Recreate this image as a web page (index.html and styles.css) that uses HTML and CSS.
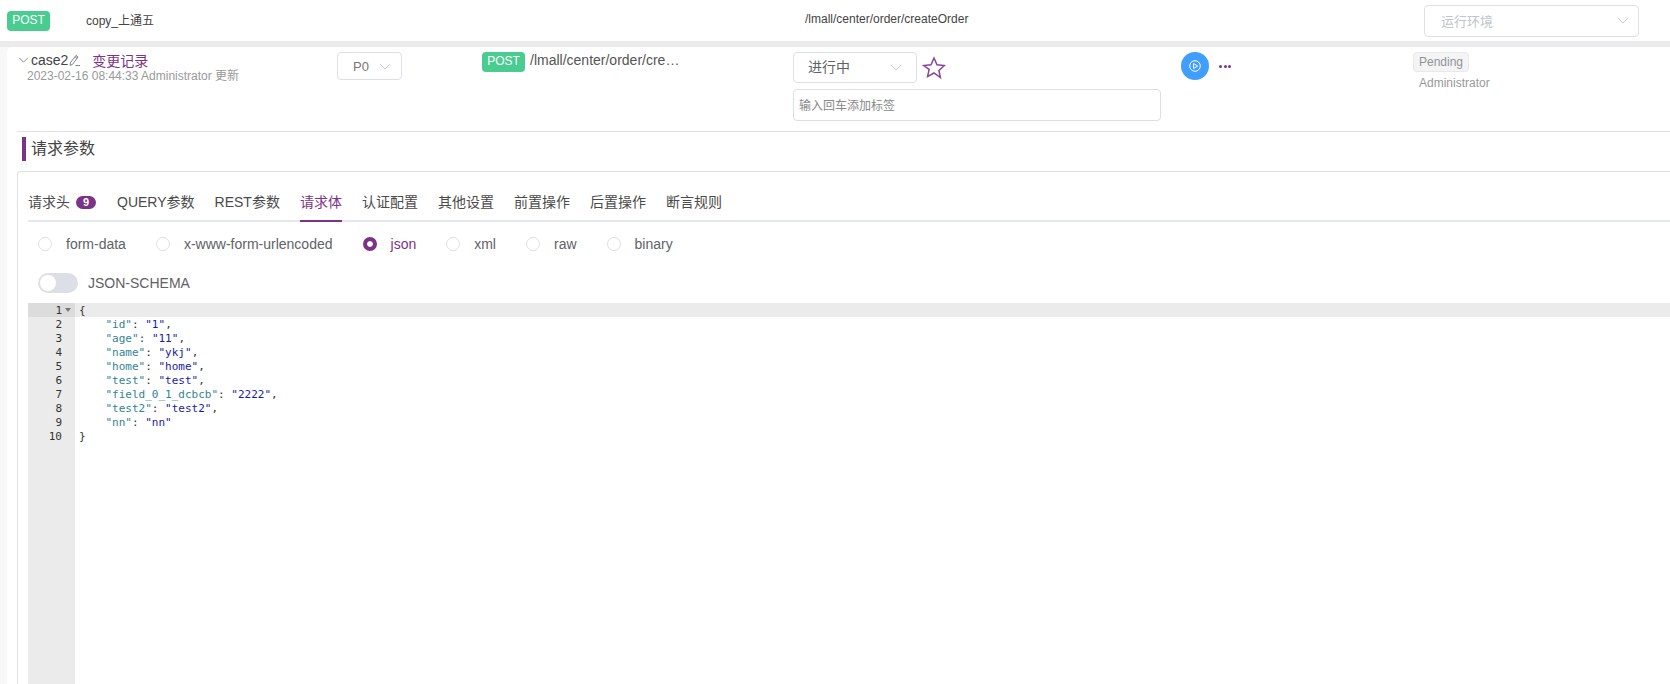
FILE: index.html
```html
<!DOCTYPE html>
<html lang="zh">
<head>
<meta charset="utf-8">
<title>用例</title>
<link rel="stylesheet" href="styles.css">
</head>
<body>
<header class="topbar">
  <span class="method">POST</span>
  <span class="api-name">copy_上通五</span>
  <span class="api-url">/lmall/center/order/createOrder</span>
  <div class="select env"><span>运行环境</span><svg class="chev" viewBox="0 0 14 8"><path d="M1 1l6 6 6-6"/></svg></div>
</header>
<div class="workspace">
<main class="card">
  <section class="case-row">
    <div class="case-info">
      <div class="case-title">
        <svg class="caret" viewBox="0 0 12 7"><path d="M1 1l5 5 5-5"/></svg>
        <span class="case-name">case2</span>
        <svg class="pencil" viewBox="0 0 13 14"><path d="M1.500 9.500L7.500 1.500l2.300 1.700-6 8-2.600 1.100z"/><path d="M6.500 3l2.300 1.700M7 12.500h5"/></svg>
        <a class="history">变更记录</a>
      </div>
      <div class="case-time">2023-02-16 08:44:33 Administrator 更新</div>
    </div>
    <div class="select priority"><span>P0</span><svg class="chev" viewBox="0 0 14 8"><path d="M1 1l6 6 6-6"/></svg></div>
    <div class="case-url"><span class="method">POST</span><span class="url-text">/lmall/center/order/cre…</span></div>
    <div class="case-status">
      <div class="status-line">
        <div class="select status"><span>进行中</span><svg class="chev" viewBox="0 0 14 8"><path d="M1 1l6 6 6-6"/></svg></div>
        <svg class="star" viewBox="0 0 24 24"><path d="M12 2l3 6.700 7.300.8-5.400 4.900 1.500 7.200L12 17l-6.400 3.600 1.500-7.200L1.700 9.500 9 8.700z"/></svg>
      </div>
      <div class="tag-input">输入回车添加标签</div>
    </div>
    <div class="case-actions">
      <span class="run"><svg viewBox="0 0 14 14"><circle cx="7" cy="7" r="5.300"/><path d="M5.600 4.500v5l4-2.500z"/></svg></span>
      <span class="more"><i></i><i></i><i></i></span>
    </div>
    <div class="case-result">
      <span class="pending">Pending</span>
      <span class="owner">Administrator</span>
    </div>
  </section>
  <h2 class="section-title">请求参数</h2>
  <section class="panel">
    <nav class="tabs">
      <a class="tab">请求头<b class="badge">9</b></a>
      <a class="tab">QUERY参数</a>
      <a class="tab">REST参数</a>
      <a class="tab active">请求体</a>
      <a class="tab">认证配置</a>
      <a class="tab">其他设置</a>
      <a class="tab">前置操作</a>
      <a class="tab">后置操作</a>
      <a class="tab">断言规则</a>
    </nav>
    <div class="radios">
      <label class="radio"><i></i>form-data</label>
      <label class="radio"><i></i>x-www-form-urlencoded</label>
      <label class="radio on"><i></i>json</label>
      <label class="radio"><i></i>xml</label>
      <label class="radio"><i></i>raw</label>
      <label class="radio"><i></i>binary</label>
    </div>
    <div class="schema"><span class="switch"></span>JSON-SCHEMA</div>
    <div class="editor">
      <div class="gutter">
        <div class="gl active">1<svg class="fold" viewBox="0 0 6 4"><path d="M0 0h6L3 4z"/></svg></div>
        <div class="gl">2</div><div class="gl">3</div><div class="gl">4</div><div class="gl">5</div>
        <div class="gl">6</div><div class="gl">7</div><div class="gl">8</div><div class="gl">9</div><div class="gl">10</div>
      </div>
      <pre class="code"><div class="cl active">{</div><div class="cl">    <span class="k">"id"</span>: <span class="s">"1"</span>,</div><div class="cl">    <span class="k">"age"</span>: <span class="s">"11"</span>,</div><div class="cl">    <span class="k">"name"</span>: <span class="s">"ykj"</span>,</div><div class="cl">    <span class="k">"home"</span>: <span class="s">"home"</span>,</div><div class="cl">    <span class="k">"test"</span>: <span class="s">"test"</span>,</div><div class="cl">    <span class="k">"field_0_1_dcbcb"</span>: <span class="s">"2222"</span>,</div><div class="cl">    <span class="k">"test2"</span>: <span class="s">"test2"</span>,</div><div class="cl">    <span class="k">"nn"</span>: <span class="s">"nn"</span></div><div class="cl">}</div></pre>
    </div>
  </section>
</main>
</div>
</body>
</html>
```
FILE: styles.css
```css
* { box-sizing: border-box; }
html, body { margin: 0; height: 684px; overflow: hidden; }
body {
  width: 1670px;
  background: #fff;
  font-family: "Liberation Sans", "Noto Sans CJK SC", sans-serif;
  color: #606266;
  display: flex;
  flex-direction: column;
}
svg { display: block; }
.topbar {
  height: 41px;
  flex: none;
  display: grid;
  grid-template-columns: 79px 719px 619px 215px;
  align-items: center;
  padding-left: 7px;
  background: #fff;
}
.method {
  display: inline-block;
  width: 43px;
  height: 20px;
  line-height: 18px;
  text-align: center;
  font-size: 12px;
  color: #fff;
  background: #49cc90;
  border-radius: 4px;
}
.topbar .method { margin-top: 1px; }
.api-name, .api-url { font-size: 12px; color: #444; margin-top: -3px; }
.select {
  display: flex;
  align-items: center;
  justify-content: space-between;
  background: #fff;
  border: 1px solid #dcdfe6;
  border-radius: 4px;
}
.chev { width: 12px; height: 7px; fill: none; stroke: #c0c4cc; stroke-width: 1; }
.env { height: 32px; padding: 0 9px 0 16px; font-size: 13px; color: #c0c4cc; }
.workspace {
  flex: 1;
  min-height: 0;
  padding-left: 7px;
  background: #f8f8f9;
  border-top: 6px solid #ebebeb;
}
.card {
  height: 100%;
  padding-left: 10px;
  background: #fff;
  border-radius: 5px 0 0 0;
}
.case-row {
  display: grid;
  grid-template-columns: 319px 145px 311px 388px 232px 1fr;
  align-items: start;
  height: 85px;
  padding: 5px 0 0 1px;
  border-bottom: 1px solid #e0e0e6;
}
.case-title { display: flex; align-items: center; height: 16px; font-size: 14px; }
.caret { width: 11px; height: 6px; fill: none; stroke: #777; stroke-width: 1; margin: 0 2px 0 0; }
.case-name { color: #444; }
.pencil { width: 12px; height: 13px; fill: none; stroke: #555; stroke-width: .8; margin-left: 1px; }
.history { margin-left: 11px; font-size: 14px; color: #7b3385; }
.case-time { margin: 1px 0 0 9px; font-size: 12px; line-height: 14px; color: #999; }
.priority { width: 65px; height: 28px; padding: 0 10px 0 15px; font-size: 13px; color: #777; }
.case-url { display: flex; align-items: flex-start; }
.url-text { margin-left: 5px; font-size: 14px; line-height: 17px; color: #555; }
.status-line { display: flex; align-items: center; }
.status { width: 124px; height: 31px; padding: 0 14px 0 14px; font-size: 14px; color: #606266; }
.status span { margin-top: -3px; }
.star { width: 24px; height: 24px; margin-left: 5px; fill: none; stroke: #85459b; stroke-width: 1.500; }
.tag-input {
  width: 368px;
  height: 32px;
  margin-top: 6px;
  padding-left: 5px;
  line-height: 32px;
  font-size: 12px;
  color: #888;
  border: 1px solid #dcdfe6;
  border-radius: 4px;
}
.case-actions { display: flex; align-items: center; }
.run {
  width: 28px;
  height: 28px;
  border-radius: 50%;
  background: #409eff;
  display: flex;
  align-items: center;
  justify-content: center;
}
.run svg { width: 14px; height: 14px; fill: none; stroke: #fff; stroke-width: 1; }
.more { display: flex; gap: 1.500px; margin-left: 10px; }
.more i { width: 3px; height: 3px; border-radius: 50%; background: #7b3385; }
.case-result { display: flex; flex-direction: column; align-items: flex-start; }
.pending {
  height: 20px;
  padding: 0 5px;
  line-height: 18px;
  font-size: 12px;
  color: #909399;
  background: #f4f4f5;
  border: 1px solid #e9e9eb;
  border-radius: 4px;
}
.owner { margin: 4px 0 0 6px; font-size: 12px; line-height: 14px; color: #999; }
.section-title {
  margin: 5px 0 10px 5px;
  height: 24px;
  line-height: 24px;
  padding-left: 5px;
  border-left: 4px solid #7b3385;
  font-size: 16px;
  font-weight: 400;
  color: #444;
}
.panel {
  margin-right: -10px;
  height: 520px;
  padding: 0 0 0 10px;
  border: 1px solid #e0e0e6;
  border-bottom: 0;
  border-radius: 4px 0 0 0;
}
.tabs {
  display: flex;
  gap: 20px;
  height: 50px;
  padding-top: 20px;
  border-bottom: 2px solid #e4e7ed;
}
.tab { height: 30px; line-height: 20px; font-size: 14px; color: #4a4a4a; display: flex; align-items: flex-start; }
.tab.active { color: #7b3385; border-bottom: 2px solid #7b3385; }
.badge {
  width: 20px;
  height: 13px;
  margin: 4px 1px 0 6px;
  border-radius: 7px;
  background: #7b3385;
  color: #fff;
  font-size: 11px;
  line-height: 13px;
  text-align: center;
}
.radios { display: flex; align-items: center; height: 44px; padding: 0 0 0 10px; }
.radio { display: flex; align-items: center; margin-right: 30px; font-size: 14px; color: #606266; }
.radio i { width: 14px; height: 14px; margin-right: 14px; border: 1px solid #dcdfe6; border-radius: 50%; background: #fff; }
.radio.on { color: #7b3385; }
.radio.on i { background: #7b3385; border: 4px solid #7b3385; box-shadow: inset 0 0 0 3px #fff; }
.schema { display: flex; align-items: center; height: 20px; margin: 7px 0 10px 10px; font-size: 14px; color: #606266; }
.switch {
  width: 40px;
  height: 20px;
  margin-right: 10px;
  border-radius: 10px;
  background: #dcdfe6;
  position: relative;
}
.switch::after {
  content: "";
  position: absolute;
  top: 2px;
  left: 2px;
  width: 16px;
  height: 16px;
  border-radius: 50%;
  background: #fff;
}
.editor { display: flex; height: 400px; font-family: "DejaVu Sans Mono", monospace; font-size: 11px; line-height: 16px; }
.gutter { width: 47px; flex: none; background: #ebebeb; color: #333; text-align: right; }
.gl { height: 14px; padding-right: 13px; position: relative; }
.gl.active { background: #dcdcdc; }
.fold { position: absolute; right: 4px; top: 5px; width: 6px; height: 4px; fill: #777; }
.code { flex: 1; margin: 0; padding: 0; font: inherit; color: #333; }
.cl { height: 14px; padding-left: 4px; }
.cl.active { background: #ebebeb; }
.k { color: #318495; }
.s { color: #1a1aa6; }
```
